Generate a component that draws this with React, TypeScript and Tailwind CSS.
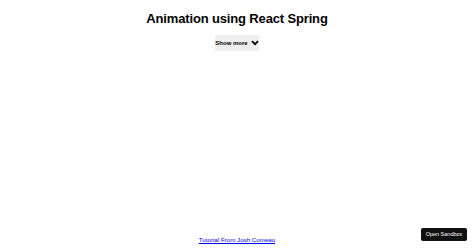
import React from "react";

export default function App() {
  return (
    <div className="relative w-[474px] h-[248px] bg-white overflow-hidden" style={{ fontFamily: '"Liberation Sans", Arial, sans-serif' }}>
      <div className="flex flex-col items-center">
        <h1 className="mt-[11px] text-[13px] leading-[16px] font-bold tracking-[-0.15px] text-black">Animation using React Spring</h1>
        <button className="mt-[8px] h-[16px] w-[44px] flex items-center justify-center gap-[3px] bg-[#efefef] text-[6px] font-bold text-black rounded-[1px]">
          <span>Show more</span>
          <svg width="8" height="6" viewBox="0 0 8 6"><path d="M1 1.2 L4 4.2 L7 1.2" stroke="#000" strokeWidth="1.8" fill="none" /></svg>
        </button>
      </div>
      <div className="absolute left-0 right-0 top-[235px] flex justify-center">
        <a href="#" className="text-[6.2px] leading-[9px] text-[#0000ee] underline">Tutorial From Josh Comeau</a>
      </div>
      <button className="absolute left-[421px] top-[228px] h-[13px] w-[46px] bg-[#111] text-white text-[5.5px] rounded-[2px] flex items-center justify-center">Open Sandbox</button>
    </div>
  );
}
